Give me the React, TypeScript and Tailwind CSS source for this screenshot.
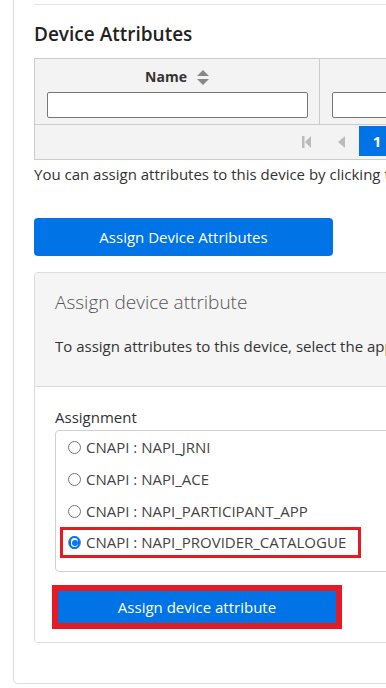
import React from "react";

const font = { fontFamily: '"Open Sans", "Noto Sans", sans-serif' };

function Radio({ checked }: { checked?: boolean }) {
  return (
    <span className="w-[13px] h-[13px] rounded-full border border-[#767676] bg-white flex items-center justify-center shrink-0">
      {checked && <span className="w-[13px] h-[13px] rounded-full border-[2px] border-[#0075ff] flex items-center justify-center"><span className="w-[6px] h-[6px] rounded-full bg-[#0075ff]" /></span>}
    </span>
  );
}

export default function App() {
  const items = ["CNAPI : NAPI_JRNI", "CNAPI : NAPI_ACE", "CNAPI : NAPI_PARTICIPANT_APP"];
  return (
    <div className="w-[386px] h-[688px] overflow-hidden bg-white text-[#212529]" style={font}>
      <div className="ml-[13px] w-[460px] h-[684px] border-l border-b border-[#dedede] rounded-bl-[5px] pl-[20px] pt-[4px]">
        <div className="border-t border-[#e5e5e5]" />
        <h4 className="mt-[17px] text-[19px] leading-[24px] font-semibold text-[#222]">Device Attributes</h4>
        <div className="mt-[12px] w-[440px] border border-[#ccc] bg-[#f3f3f3]">
          <div className="flex h-[66px] border-b border-[#ccc]">
            <div className="w-[285px] shrink-0 border-r border-[#ccc] flex flex-col items-center pt-[8px]">
              <div className="flex items-center gap-[10px] text-[14px] font-bold text-[#333] leading-[20px]">
                <span>Name</span>
                <svg width="12" height="15" viewBox="0 0 12 15"><path d="M6 0 L12 6 H0 Z" fill="#888" /><path d="M6 15 L12 9 H0 Z" fill="#888" /></svg>
              </div>
              <div className="mt-[5px] w-[261px] h-[26px] bg-white border border-[#767676] rounded-[2px]" />
            </div>
            <div className="flex-1 min-w-0 flex flex-col pt-[33px] pl-[12px]">
              <div className="w-[200px] h-[26px] bg-white border border-[#767676] rounded-[2px]" />
            </div>
          </div>
          <div className="h-[34px] flex items-stretch pl-[254px]">
            <div className="w-[35px] flex items-center justify-center">
              <svg width="9" height="12" viewBox="0 0 9 12"><rect x="0" y="0" width="2.5" height="12" fill="#bbb" /><path d="M9 0 V12 L3 6 Z" fill="#bbb" /></svg>
            </div>
            <div className="w-[35px] flex items-center justify-center">
              <svg width="7" height="12" viewBox="0 0 7 12"><path d="M7 0 V12 L0 6 Z" fill="#bbb" /></svg>
            </div>
            <div className="w-[36px] mt-[1px] mb-[3px] bg-[#0073e6] text-white font-bold text-[15px] flex items-center justify-center">1</div>
          </div>
        </div>
        <p className="mt-[3px] text-[15px] leading-[22px] text-[#333] whitespace-nowrap">You can assign attributes to this device by clicking the button below.</p>
        <button className="mt-[33px] w-[299px] h-[38px] rounded-[4px] bg-[#0073e6] text-white text-[15px] block">Assign Device Attributes</button>
        <div className="mt-[16px] w-[440px] border border-[#dcdcdc] rounded-[4px] overflow-hidden">
          <div className="bg-[#f5f5f5] border-b border-[#dcdcdc] h-[114px] pl-[20px] pt-[16px]">
            <div className="text-[19px] font-light leading-[26px] text-[#555]">Assign device attribute</div>
            <div className="mt-[20px] text-[15px] leading-[22px] whitespace-nowrap text-[#333]">To assign attributes to this device, select the appropriate attribute below.</div>
          </div>
          <div className="bg-white pl-[20px] pt-[19px] pb-[13px]">
            <div className="text-[15px] leading-[22px] text-[#333]">Assignment</div>
            <div className="mt-[2px] border border-[#d0d0d0] rounded-[4px] h-[142px] pt-0 pl-[4px]">
              {items.map((t) => (
                <div key={t} className="h-[32px] flex items-center gap-[5px] pl-[8px] text-[15px] text-[#444]">
                  <Radio />
                  <span>{t}</span>
                </div>
              ))}
              <div className="inline-flex border-[3px] border-[#e51a24] bg-white h-[31px] items-center gap-[5px] pl-[5px] pr-[12px] text-[15px] text-[#444]">
                <Radio checked />
                <span>CNAPI : NAPI_PROVIDER_CATALOGUE</span>
              </div>
            </div>
            <div className="mt-[13px] -ml-[3px] w-[290px] border-[6px] border-[#e51a24]">
              <button className="w-full h-[32px] bg-[#0073e6] text-white text-[15px] block">Assign device attribute</button>
            </div>
          </div>
        </div>
      </div>
    </div>
  );
}
